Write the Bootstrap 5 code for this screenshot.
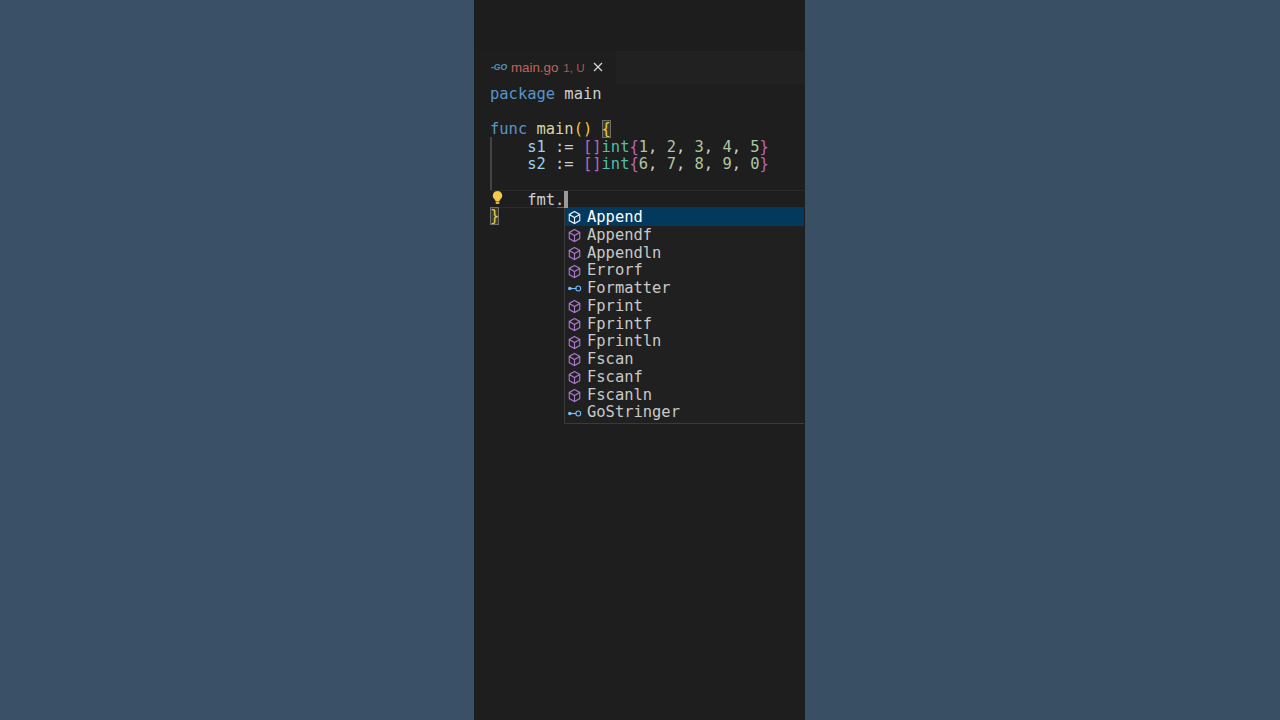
<!DOCTYPE html>
<html lang="en">
<head>
<meta charset="utf-8">
<title>main.go</title>
<link href="https://cdn.jsdelivr.net/npm/bootstrap@5.3.0/dist/css/bootstrap.min.css" rel="stylesheet">
<style>
html,body{height:100%;margin:0;overflow:hidden;background:#3a5064}
.stage{width:1280px;height:720px}
.side-l{width:474px;background:#3a5066}
.side-r{width:475px;background:#394f64}
.phone{width:331px;background:#1e1e1e;position:relative;font-family:"DejaVu Sans Mono",monospace}
.topgap{height:51px;background:#1d1d1d}
.tabbar{height:33px;background:#1b1b1b}
.tabitem{width:142px;background:#1e1e1e;padding-left:17px;font-family:"Liberation Sans",Arial,sans-serif;font-size:13.3px;color:#c4635c}
.tabrest{background:#212121;height:33px}
.goglyph{color:#4b9fb8;font-size:8.6px;font-weight:700;font-style:italic;width:20px}
.tabstat{font-size:11.6px;margin-left:5px;color:#a55a55}
.closex{margin-left:8px;margin-top:-1px}
.code{padding-top:1px;height:636px;position:relative}
.ln{height:17.7px;line-height:17.7px;font-size:15.45px;padding-left:16px;white-space:pre;color:#cfcfcf;position:relative;top:.6px}
.kw{color:#5a95c8}.fn{color:#d6d6a6}.v{color:#98d3f2}.ty{color:#52bda8}.nm{color:#b0c6a2}.br1{color:#eccb3a}.br2{color:#b866b8}
.boxb{outline:1px solid #6e6e6e;outline-offset:-1px;background:#3a3a2e}
.curline{border-top:1px solid #2a2a2a;border-bottom:1px solid #2a2a2a;height:18.4px;margin-top:-2px;margin-bottom:.3px;line-height:16.4px;margin-left:16px;padding-left:0}
.caret{display:inline-block;width:4px;height:17px;background:#9a9a9a;vertical-align:-3px;margin-left:-.5px}
.guide{position:absolute;left:16px;top:53px;width:2px;height:53px;background:#444}
.bulb{position:absolute;left:17px;top:106px}
.squig{position:absolute;left:83px;top:123px;width:7px;height:1px;background:#a8473a}
.suggest{position:absolute;left:90px;top:124px;width:240px;height:216px;background:#202020;border:1px solid #3a3a3a;border-right:0;border-top:0}
.sitem{height:17.75px;line-height:17.75px;font-size:15.45px;color:#c9c9c9;padding-left:2px;padding-top:2px;gap:5px;white-space:pre}
.sitem.on{background:#04395e;color:#fff}
.sitem svg{flex:none}
</style>
</head>
<body>
<div class="stage d-flex">
  <div class="side-l"></div>
  <div class="phone d-flex flex-column">
    <div class="topgap"></div>
    <div class="tabbar d-flex align-items-center">
      <div class="tabitem h-100 d-flex align-items-center">
        <span class="goglyph">-GO</span>
        <span>main.go</span><span class="tabstat">1, U</span>
        <svg class="closex" width="10" height="10" viewBox="0 0 10 10"><path d="M1 1l8 8M9 1l-8 8" stroke="#d8d8d8" stroke-width="1.2"/></svg>
      </div>
      <div class="tabrest flex-grow-1"></div>
    </div>
    <div class="code">
<div class="ln"><span class="kw">package</span> main</div>
<div class="ln"> </div>
<div class="ln"><span class="kw">func</span> <span class="fn">main</span><span class="br1">()</span> <span class="br1 boxb">{</span></div>
<div class="ln">    <span class="v">s1</span> := <span class="br2">[]</span><span class="ty">int</span><span class="br2">{</span><span class="nm">1</span>, <span class="nm">2</span>, <span class="nm">3</span>, <span class="nm">4</span>, <span class="nm">5</span><span class="br2">}</span></div>
<div class="ln">    <span class="v">s2</span> := <span class="br2">[]</span><span class="ty">int</span><span class="br2">{</span><span class="nm">6</span>, <span class="nm">7</span>, <span class="nm">8</span>, <span class="nm">9</span>, <span class="nm">0</span><span class="br2">}</span></div>
<div class="ln"> </div>
<div class="ln curline">    fmt.<span class="caret"></span></div>
<div class="ln"><span class="br1 boxb">}</span></div>
      <div class="guide"></div>
      <svg class="bulb" width="13" height="15" viewBox="0 0 13 15"><path d="M6.5 1a4.7 4.7 0 0 0-3 8.3c.6.6.9 1.1 1 1.9h4c.1-.8.4-1.3 1-1.9a4.7 4.7 0 0 0-3-8.3z" fill="#f2c94c"/><rect x="4.6" y="11.6" width="3.8" height="2.4" rx=".8" fill="#d9b446"/></svg>
      <div class="squig"></div>
      <div class="suggest">
        <div class="sitem on d-flex align-items-center"><svg width="15" height="15" viewBox="0 0 16 16" fill="none" stroke="#e6f0f6" stroke-width="1.2"><path d="M8 1.5l5.6 3.2v6.6L8 14.5l-5.6-3.2V4.7zM2.4 4.7L8 8l5.6-3.3M8 8v6.5"/></svg><span>Append</span></div>
        <div class="sitem d-flex align-items-center"><svg width="15" height="15" viewBox="0 0 16 16" fill="none" stroke="#a878cc" stroke-width="1.2"><path d="M8 1.5l5.6 3.2v6.6L8 14.5l-5.6-3.2V4.7zM2.4 4.7L8 8l5.6-3.3M8 8v6.5"/></svg><span>Appendf</span></div>
        <div class="sitem d-flex align-items-center"><svg width="15" height="15" viewBox="0 0 16 16" fill="none" stroke="#a878cc" stroke-width="1.2"><path d="M8 1.5l5.6 3.2v6.6L8 14.5l-5.6-3.2V4.7zM2.4 4.7L8 8l5.6-3.3M8 8v6.5"/></svg><span>Appendln</span></div>
        <div class="sitem d-flex align-items-center"><svg width="15" height="15" viewBox="0 0 16 16" fill="none" stroke="#a878cc" stroke-width="1.2"><path d="M8 1.5l5.6 3.2v6.6L8 14.5l-5.6-3.2V4.7zM2.4 4.7L8 8l5.6-3.3M8 8v6.5"/></svg><span>Errorf</span></div>
        <div class="sitem d-flex align-items-center"><svg width="15" height="15" viewBox="0 0 16 16" fill="none"><circle cx="3" cy="8" r="1.9" fill="#75beff"/><path d="M4 8h6" stroke="#75beff" stroke-width="1.2"/><circle cx="12" cy="8" r="2.6" stroke="#75beff" stroke-width="1.1"/></svg><span>Formatter</span></div>
        <div class="sitem d-flex align-items-center"><svg width="15" height="15" viewBox="0 0 16 16" fill="none" stroke="#a878cc" stroke-width="1.2"><path d="M8 1.5l5.6 3.2v6.6L8 14.5l-5.6-3.2V4.7zM2.4 4.7L8 8l5.6-3.3M8 8v6.5"/></svg><span>Fprint</span></div>
        <div class="sitem d-flex align-items-center"><svg width="15" height="15" viewBox="0 0 16 16" fill="none" stroke="#a878cc" stroke-width="1.2"><path d="M8 1.5l5.6 3.2v6.6L8 14.5l-5.6-3.2V4.7zM2.4 4.7L8 8l5.6-3.3M8 8v6.5"/></svg><span>Fprintf</span></div>
        <div class="sitem d-flex align-items-center"><svg width="15" height="15" viewBox="0 0 16 16" fill="none" stroke="#a878cc" stroke-width="1.2"><path d="M8 1.5l5.6 3.2v6.6L8 14.5l-5.6-3.2V4.7zM2.4 4.7L8 8l5.6-3.3M8 8v6.5"/></svg><span>Fprintln</span></div>
        <div class="sitem d-flex align-items-center"><svg width="15" height="15" viewBox="0 0 16 16" fill="none" stroke="#a878cc" stroke-width="1.2"><path d="M8 1.5l5.6 3.2v6.6L8 14.5l-5.6-3.2V4.7zM2.4 4.7L8 8l5.6-3.3M8 8v6.5"/></svg><span>Fscan</span></div>
        <div class="sitem d-flex align-items-center"><svg width="15" height="15" viewBox="0 0 16 16" fill="none" stroke="#a878cc" stroke-width="1.2"><path d="M8 1.5l5.6 3.2v6.6L8 14.5l-5.6-3.2V4.7zM2.4 4.7L8 8l5.6-3.3M8 8v6.5"/></svg><span>Fscanf</span></div>
        <div class="sitem d-flex align-items-center"><svg width="15" height="15" viewBox="0 0 16 16" fill="none" stroke="#a878cc" stroke-width="1.2"><path d="M8 1.5l5.6 3.2v6.6L8 14.5l-5.6-3.2V4.7zM2.4 4.7L8 8l5.6-3.3M8 8v6.5"/></svg><span>Fscanln</span></div>
        <div class="sitem d-flex align-items-center"><svg width="15" height="15" viewBox="0 0 16 16" fill="none"><circle cx="3" cy="8" r="1.9" fill="#75beff"/><path d="M4 8h6" stroke="#75beff" stroke-width="1.2"/><circle cx="12" cy="8" r="2.6" stroke="#75beff" stroke-width="1.1"/></svg><span>GoStringer</span></div>
      </div>
    </div>
  </div>
  <div class="side-r"></div>
</div>
<script src="https://cdn.jsdelivr.net/npm/bootstrap@5.3.0/dist/js/bootstrap.bundle.min.js"></script>
</body>
</html>
